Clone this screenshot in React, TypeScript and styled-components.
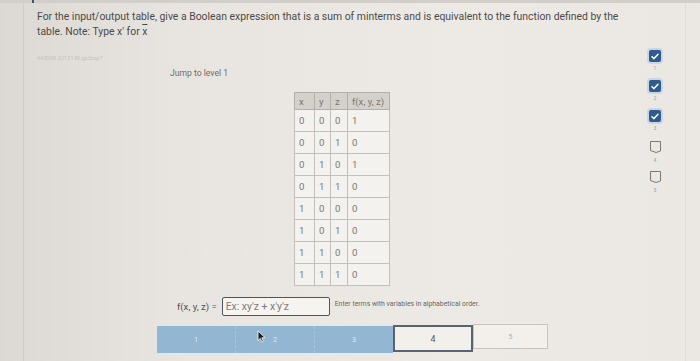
import React from "react";
import styled, { createGlobalStyle } from "styled-components";

const Global = createGlobalStyle`
  html, body { margin: 0; padding: 0; }
  body {
    width: 700px;
    height: 361px;
    overflow: hidden;
    background: #e6e3de;
    font-family: Roboto, "Open Sans", "Liberation Sans", sans-serif;
  }
`;

const Page = styled.div`
  position: relative;
  width: 700px;
  height: 361px;
  display: flex;
  flex-direction: column;
  background: linear-gradient(90deg, #dcd9d4 0%, #e8e5e0 25%, #edeae5 65%, #ebe8e3 100%);
  overflow: hidden;
`;

const TopBand = styled.div`
  height: 3px;
  background: #d2cfca;
  display: flex;
`;

const Tick = styled.div`
  width: 2px;
  height: 3px;
  margin-left: 32px;
  background: #3b5576;
`;

const Body = styled.div`
  flex: 1;
  display: flex;
`;

const Gutter = styled.div`
  width: 23px;
  border-right: 1px solid #d0cdc8;
`;

const Main = styled.div`
  flex: 1;
  display: flex;
  flex-direction: column;
  align-items: flex-start;
  padding: 6px 0 0 13px;
`;

const Prompt = styled.div`
  font-size: 10.4px;
  line-height: 15px;
  color: #4b4a48;
`;

const Line = styled.span`
  display: block;
  white-space: nowrap;
`;

const Bar = styled.span`
  text-decoration: overline;
`;

const QuestionId = styled.div`
  margin-top: 16px;
  font-size: 5.5px;
  color: #c4c0ba;
  letter-spacing: 0.1px;
`;

const Jump = styled.div`
  margin: 7px 0 0 133px;
  font-size: 8.6px;
  color: #6e6c69;
`;

const Table = styled.table`
  margin: 14px 0 0 257px;
  border-collapse: collapse;
  font-size: 9.6px;
  color: #7a7874;
  background: #f4f2ee;
  border: 1px solid #b3afa9;
`;

const Th = styled.th<{ $w: number }>`
  width: ${(p) => p.$w}px;
  height: 17px;
  padding: 0 0 0 4px;
  box-sizing: border-box;
  text-align: left;
  font-weight: 400;
  background: #d4d0ca;
  border: 1px solid #b3afa9;
`;

const Td = styled.td`
  height: 22px;
  box-sizing: border-box;
  padding: 0 0 0 4px;
  border: 1px solid #c3bfb9;
`;

const InputRow = styled.div`
  display: flex;
  align-items: center;
  margin: 11px 0 0 140px;
`;

const FLabel = styled.span`
  font-size: 9.6px;
  color: #55534f;
  margin-right: 5px;
`;

const Answer = styled.input`
  width: 108px;
  height: 19px;
  box-sizing: border-box;
  border: 1.5px solid #4a5566;
  border-radius: 2px;
  background: #f6f4f0;
  padding: 0 3px;
  font-family: Roboto, "Open Sans", "Liberation Sans", sans-serif;
  font-size: 10.4px;
  outline: none;
  &::placeholder {
    color: #7d7b78;
  }
`;

const Hint = styled.span`
  margin: -6px 0 0 5px;
  font-size: 6.9px;
  color: #6a6865;
`;

const Levels = styled.div`
  position: relative;
  display: flex;
  align-items: stretch;
  margin: 10px 0 0 120px;
  height: 27px;
`;

const Seg = styled.div<{ $first?: boolean }>`
  width: 78px;
  display: flex;
  align-items: center;
  justify-content: center;
  background: #93b6d3;
  color: #e4edf5;
  font-size: 6.5px;
  border-left: ${(p) => (p.$first ? "none" : "1px dashed #a9c4dc")};
`;

const Box = styled.div<{ $active?: boolean }>`
  width: ${(p) => (p.$active ? 80 : 75)}px;
  display: flex;
  align-items: center;
  justify-content: center;
  box-sizing: border-box;
  background: #f2f0eb;
  border: ${(p) => (p.$active ? "2px solid #5b6271" : "1px solid #c8c4be")};
  color: ${(p) => (p.$active ? "#5a5856" : "#b2aea8")};
  font-size: ${(p) => (p.$active ? 9 : 7)}px;
  margin-top: ${(p) => (p.$active ? -1 : -2)}px;
  height: ${(p) => (p.$active ? 27 : 25)}px;
`;

const Cursor = styled.svg`
  position: absolute;
  left: 100px;
  top: 4px;
`;

const Sidebar = styled.div`
  width: 60px;
  display: flex;
  flex-direction: column;
  align-items: center;
  padding-top: 47px;
  gap: 3px;
  border-right: 1px solid #dfdcd7;
  margin-right: 14px;
`;

const Step = styled.div`
  display: flex;
  flex-direction: column;
  align-items: center;
  height: 27px;
`;

const Check = styled.div`
  width: 12px;
  height: 12px;
  border-radius: 2px;
  background: #2f5b8d;
  box-shadow: 0 0 0 2px #c8d6e6;
  display: flex;
  align-items: center;
  justify-content: center;
`;

const StepNum = styled.span`
  margin-top: 4px;
  font-size: 4.5px;
  color: #9a9792;
`;

const rows = [
  [0, 0, 0, 1],
  [0, 0, 1, 0],
  [0, 1, 0, 1],
  [0, 1, 1, 0],
  [1, 0, 0, 0],
  [1, 0, 1, 0],
  [1, 1, 0, 0],
  [1, 1, 1, 0],
];

function CheckMark() {
  return (
    <svg width="8" height="7" viewBox="0 0 8 7">
      <path d="M1 3.8 L3 5.6 L7 1.2" fill="none" stroke="#ffffff" strokeWidth="1.5" strokeLinecap="round" strokeLinejoin="round" />
    </svg>
  );
}

function EmptyBox() {
  return (
    <svg width="13" height="14" viewBox="0 0 13 14">
      <path d="M1.5 1.5 H11.5 V11 L7 12.5 L1.5 10.5 Z" fill="none" stroke="#6f6c68" strokeWidth="0.9" />
    </svg>
  );
}

export default function App() {
  return (
    <>
      <Global />
      <Page>
        <TopBand>
          <Tick />
        </TopBand>
        <Body>
          <Gutter />
          <Main>
            <Prompt>
              <Line>
                For the input/output table, give a Boolean expression that is a sum of minterms and is equivalent to the function defined by the
              </Line>
              <Line>
                table. Note: Type x' for <Bar>x</Bar>
              </Line>
            </Prompt>
            <QuestionId>443908.3213148.qx3zqy7</QuestionId>
            <Jump>Jump to level 1</Jump>
            <Table>
              <thead>
                <tr>
                  <Th $w={20}>x</Th>
                  <Th $w={16}>y</Th>
                  <Th $w={17}>z</Th>
                  <Th $w={42}>f(x, y, z)</Th>
                </tr>
              </thead>
              <tbody>
                {rows.map((r, i) => (
                  <tr key={i}>
                    {r.map((v, j) => (
                      <Td key={j}>{v}</Td>
                    ))}
                  </tr>
                ))}
              </tbody>
            </Table>
            <InputRow>
              <FLabel>f(x, y, z) =</FLabel>
              <Answer placeholder="Ex: xy'z + x'y'z" />
              <Hint>Enter terms with variables in alphabetical order.</Hint>
            </InputRow>
            <Levels>
              <Seg $first>1</Seg>
              <Seg>2</Seg>
              <Seg>3</Seg>
              <Box $active>4</Box>
              <Box>5</Box>
              <Cursor width="9" height="13" viewBox="0 0 9 13">
                <path d="M1 1 L1 10.5 L3.3 8.4 L5 12 L6.4 11.3 L4.8 7.8 L8 7.6 Z" fill="#1c1c1c" stroke="#ffffff" strokeWidth="0.8" />
              </Cursor>
            </Levels>
          </Main>
          <Sidebar>
            {[1, 2, 3].map((n) => (
              <Step key={n}>
                <Check>
                  <CheckMark />
                </Check>
                <StepNum>{n}</StepNum>
              </Step>
            ))}
            {[4, 5].map((n) => (
              <Step key={n}>
                <EmptyBox />
                <StepNum>{n}</StepNum>
              </Step>
            ))}
          </Sidebar>
        </Body>
      </Page>
    </>
  );
}
